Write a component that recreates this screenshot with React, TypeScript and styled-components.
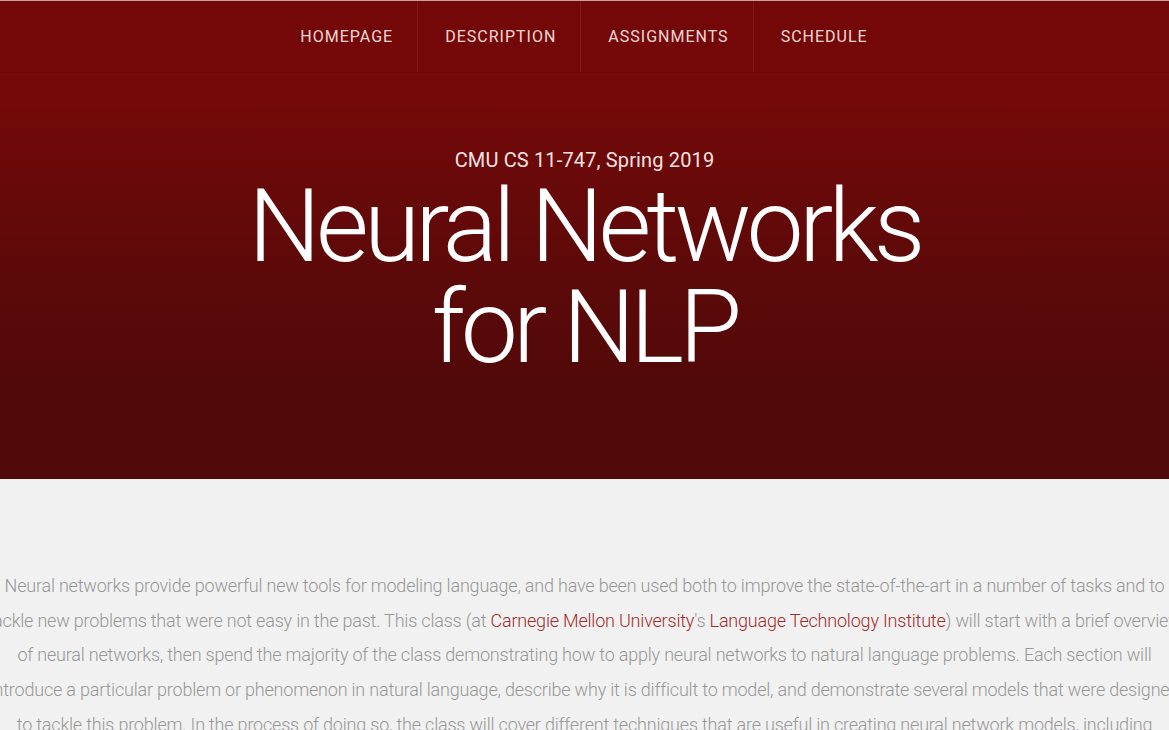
import React from "react";
import styled, { createGlobalStyle } from "styled-components";

const GlobalStyle = createGlobalStyle`
  html, body {
    margin: 0;
    padding: 0;
    background: #f1f1f1;
    font-family: Roboto, "Liberation Sans", sans-serif;
  }
  * { box-sizing: border-box; }
`;

const navItems = ["Homepage", "Description", "Assignments", "Schedule"];

const App = () => {
  return (
    <>
      <GlobalStyle />
      <Page>
        <Header>
          <NavBar>
            <NavList>
              {navItems.map((item, i) => (
                <NavItem key={item} $last={i === navItems.length - 1}>
                  <NavLink href="#">{item}</NavLink>
                </NavItem>
              ))}
            </NavList>
          </NavBar>
          <Hero>
            <Subtitle>CMU CS 11-747, Spring 2019</Subtitle>
            <Title>
              Neural Networks
              <br />
              for NLP
            </Title>
          </Hero>
        </Header>
        <Content>
          <Description>
            Neural networks provide powerful new tools for modeling language, and have been used
            both to improve the state-of-the-art in a number of tasks and to tackle new problems
            that were not easy in the past. This class (at{" "}
            <TextLink href="#">Carnegie Mellon University</TextLink>'s{" "}
            <TextLink href="#">Language Technology Institute</TextLink>) will start with a brief
            overview of neural networks, then spend the majority of the class demonstrating how to
            apply neural networks to natural language problems. Each section will introduce a
            particular problem or phenomenon in natural language, describe why it is difficult to
            model, and demonstrate several models that were designed to tackle this problem. In the
            process of doing so, the class will cover different techniques that are useful in
            creating neural network models, including handling variably sized and structured
            sentences, efficient handling of large data, semi-supervised and unsupervised learning,
            structured prediction, and multilingual modeling.
          </Description>
        </Content>
      </Page>
    </>
  );
};

const Page = styled.div`
  width: 100%;
  height: 730px;
  overflow: hidden;
`;

const Header = styled.header`
  background: linear-gradient(180deg, #790a0a 0%, #740909 20%, #5e0909 55%, #520909 80%, #520909 100%);
  border-top: 1px solid #c9a3a3;
`;

const NavBar = styled.nav`
  height: 72px;
  background: #740808;
  border-bottom: 1px solid #6a0707;
  display: flex;
  justify-content: center;
`;

const NavList = styled.ul`
  display: flex;
  list-style: none;
  margin: 0;
  padding: 0;
  transform: translateX(-2px);
`;

const NavItem = styled.li<{ $last?: boolean }>`
  display: flex;
  border-right: ${(p) => (p.$last ? "none" : "1px solid #821818")};
`;

const NavLink = styled.a`
  display: flex;
  align-items: center;
  padding: 0 24px 1px 27px;
  color: #f2d6d6;
  font-size: 16px;
  font-weight: 400;
  letter-spacing: 1px;
  text-transform: uppercase;
  text-decoration: none;
`;

const Hero = styled.div`
  height: 406px;
  display: flex;
  flex-direction: column;
  align-items: center;
  padding-top: 73px;
`;

const Subtitle = styled.div`
  color: #f6e2e2;
  font-size: 20px;
  font-weight: 400;
  line-height: 28px;
  letter-spacing: 0.15px;
`;

const Title = styled.h1`
  margin: 2px 0 0;
  color: #ffffff;
  font-size: 102px;
  font-weight: 300;
  line-height: 101px;
  letter-spacing: -4.8px;
  text-align: center;
`;

const Content = styled.section`
  display: flex;
  justify-content: center;
  padding-top: 90px;
`;

const Description = styled.p`
  flex: 0 0 1195px;
  margin: 0;
  color: #979797;
  font-size: 18px;
  font-weight: 300;
  line-height: 34.7px;
  letter-spacing: -0.2px;
  text-align: center;
`;

const TextLink = styled.a`
  color: #a52a2a;
  text-decoration: none;
`;

export default App;
